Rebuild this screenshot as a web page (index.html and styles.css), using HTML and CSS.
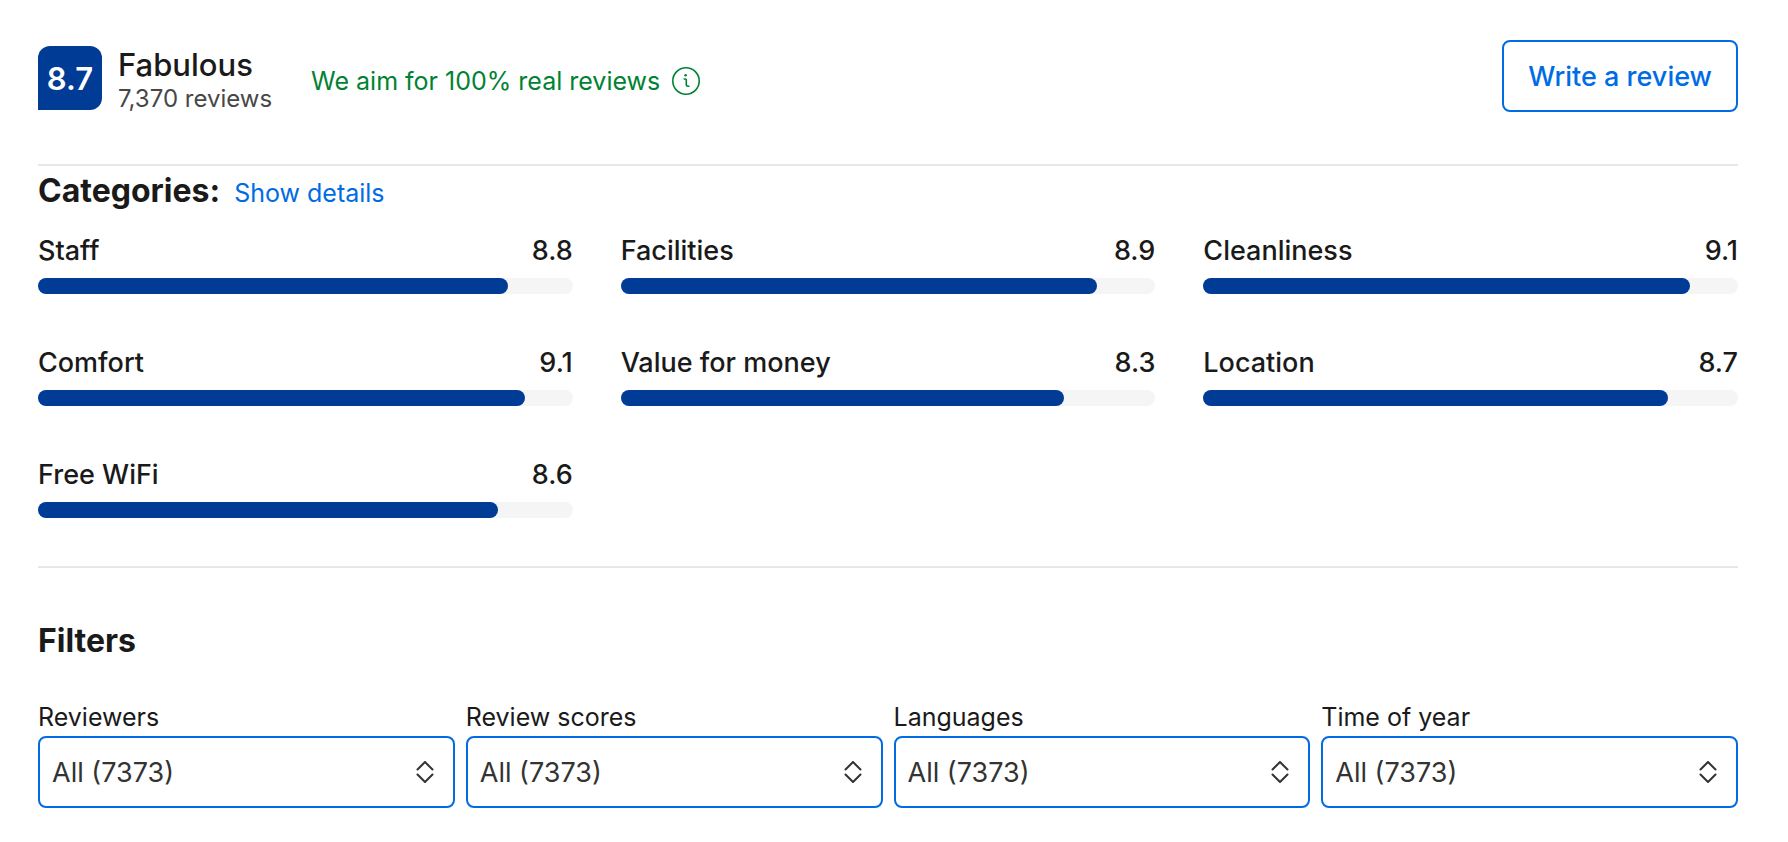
FILE: index.html
```html
<!DOCTYPE html>
<html lang="en">
<head>
  <meta charset="UTF-8">
  <meta name="viewport" content="width=device-width, initial-scale=1.0">
  <title>Guest reviews</title>
  <link rel="stylesheet" href="styles.css">
</head>
<body>
  <header class="summary">
    <div class="score-badge">8.7</div>
    <div class="score-text">
      <div class="score-title">Fabulous</div>
      <div class="score-count">7,370 reviews</div>
    </div>
    <div class="real-reviews">
      <span>We aim for 100% real reviews</span>
      <svg class="info-icon" viewBox="0 0 28 28" fill="none" stroke="currentColor" aria-hidden="true">
        <circle cx="14" cy="14" r="13.2" stroke-width="1.6"/>
        <path d="M12.2 12h1.2a.9.9 0 0 1 .9.9v4.700a1.700 1.700 0 0 0 1.700 1.700h.9" stroke-width="1.6" stroke-linecap="round"/>
        <circle cx="13.600" cy="8.300" r="1.300" fill="currentColor" stroke="none"/>
      </svg>
    </div>
    <button type="button" class="write-btn">Write a review</button>
  </header>

  <main>
    <section class="categories">
      <div class="categories-head">
        <h2>Categories:</h2>
        <a href="#details">Show details</a>
      </div>

      <ul class="category-list" id="details">
        <li class="category">
          <div class="category-row"><span>Staff</span><span>8.8</span></div>
          <div class="bar"><div class="bar-fill" style="width: 88%"></div></div>
        </li>
        <li class="category">
          <div class="category-row"><span>Facilities</span><span>8.9</span></div>
          <div class="bar"><div class="bar-fill" style="width: 89%"></div></div>
        </li>
        <li class="category">
          <div class="category-row"><span>Cleanliness</span><span>9.1</span></div>
          <div class="bar"><div class="bar-fill" style="width: 91%"></div></div>
        </li>
        <li class="category">
          <div class="category-row"><span>Comfort</span><span>9.1</span></div>
          <div class="bar"><div class="bar-fill" style="width: 91%"></div></div>
        </li>
        <li class="category">
          <div class="category-row"><span>Value for money</span><span>8.3</span></div>
          <div class="bar"><div class="bar-fill" style="width: 83%"></div></div>
        </li>
        <li class="category">
          <div class="category-row"><span>Location</span><span>8.7</span></div>
          <div class="bar"><div class="bar-fill" style="width: 87%"></div></div>
        </li>
        <li class="category">
          <div class="category-row"><span>Free WiFi</span><span>8.6</span></div>
          <div class="bar"><div class="bar-fill" style="width: 86%"></div></div>
        </li>
      </ul>
    </section>

    <section class="filters">
      <h2>Filters</h2>
      <form class="filter-form">
        <div class="filter">
          <label for="reviewers">Reviewers</label>
          <div class="select-box">
            <select id="reviewers"><option>All (7373)</option></select>
            <svg class="select-icon" viewBox="0 0 18 22" aria-hidden="true"><path d="M1.500 8.500 9 1l7.500 7.500M1.500 13.500 9 21l7.500-7.500"/></svg>
          </div>
        </div>
        <div class="filter">
          <label for="scores">Review scores</label>
          <div class="select-box">
            <select id="scores"><option>All (7373)</option></select>
            <svg class="select-icon" viewBox="0 0 18 22" aria-hidden="true"><path d="M1.500 8.500 9 1l7.500 7.500M1.500 13.500 9 21l7.500-7.500"/></svg>
          </div>
        </div>
        <div class="filter">
          <label for="languages">Languages</label>
          <div class="select-box">
            <select id="languages"><option>All (7373)</option></select>
            <svg class="select-icon" viewBox="0 0 18 22" aria-hidden="true"><path d="M1.500 8.500 9 1l7.500 7.500M1.500 13.500 9 21l7.500-7.500"/></svg>
          </div>
        </div>
        <div class="filter">
          <label for="time">Time of year</label>
          <div class="select-box">
            <select id="time"><option>All (7373)</option></select>
            <svg class="select-icon" viewBox="0 0 18 22" aria-hidden="true"><path d="M1.500 8.500 9 1l7.500 7.500M1.500 13.500 9 21l7.500-7.500"/></svg>
          </div>
        </div>
      </form>
    </section>
  </main>
</body>
</html>
```
FILE: styles.css
```css
* {
  margin: 0;
  padding: 0;
  box-sizing: border-box;
}

body {
  font-family: Inter, "Liberation Sans", sans-serif;
  font-size: 25px;
  line-height: 34px;
  color: #1a1a1a;
  background-color: #fff;
  padding: 40px 50px 34px 38px;
}

h2 {
  font-size: 32px;
  line-height: 42px;
  font-weight: 700;
}

/* Score summary */
.summary {
  display: flex;
  align-items: flex-start;
  padding-bottom: 48px;
  border-bottom: 2px solid #e7e7e7;
}

.score-badge {
  width: 64px;
  height: 64px;
  margin-top: 6px;
  border-radius: 12px 12px 12px 0;
  background-color: #003b95;
  color: #fff;
  font-size: 31px;
  line-height: 66px;
  font-weight: 600;
  text-align: center;
}

.score-text {
  margin-top: 8px;
  margin-left: 16px;
}

.score-title {
  font-size: 31px;
  font-weight: 500;
}

.score-count {
  color: #474747;
  font-size: 24px;
}

.real-reviews {
  display: flex;
  align-items: center;
  gap: 12px;
  margin-top: 24px;
  margin-left: 39px;
  color: #008234;
}

.info-icon {
  width: 28px;
  height: 28px;
}

.write-btn {
  height: 72px;
  margin-left: auto;
  padding: 0 24px;
  border: 2px solid #006ce4;
  border-radius: 8px;
  background-color: #fff;
  color: #006ce4;
  font-family: inherit;
  font-size: 27px;
  font-weight: 500;
  cursor: pointer;
}

/* Categories */
.categories {
  padding: 4px 0 48px;
  border-bottom: 2px solid #e7e7e7;
}

.categories-head {
  display: flex;
  align-items: baseline;
  gap: 14px;
  margin-bottom: 18px;
}

.categories-head a {
  color: #006ce4;
  text-decoration: none;
}

.category-list {
  display: grid;
  grid-template-columns: repeat(3, 1fr);
  gap: 48px;
  list-style: none;
}

.category-row {
  display: flex;
  justify-content: space-between;
  margin-bottom: 6px;
  font-size: 27px;
  line-height: 42px;
  font-weight: 500;
}

.bar {
  height: 16px;
  border-radius: 8px;
  background-color: #f5f5f5;
}

.bar-fill {
  height: 16px;
  border-radius: 8px;
  background-color: #003b95;
}

/* Filters */
.filters {
  padding-top: 52px;
}

.filters h2 {
  margin-bottom: 38px;
}

.filter-form {
  display: grid;
  grid-template-columns: repeat(4, 1fr);
  gap: 11px;
}

.filter label {
  display: block;
  margin-bottom: 2px;
}

.select-box {
  position: relative;
}

.select-box select {
  display: block;
  width: 100%;
  height: 72px;
  padding: 0 48px 0 12px;
  border: 2px solid #006ce4;
  border-radius: 8px;
  background-color: #fff;
  color: #333;
  font-family: inherit;
  font-size: 27px;
  appearance: none;
}

/* Arrows sit over the select */
.select-icon {
  position: absolute;
  top: 25px;
  right: 21px;
  width: 18px;
  height: 22px;
  fill: none;
  stroke: #333;
  stroke-width: 2;
  stroke-linecap: round;
  stroke-linejoin: round;
  pointer-events: none;
}
```
